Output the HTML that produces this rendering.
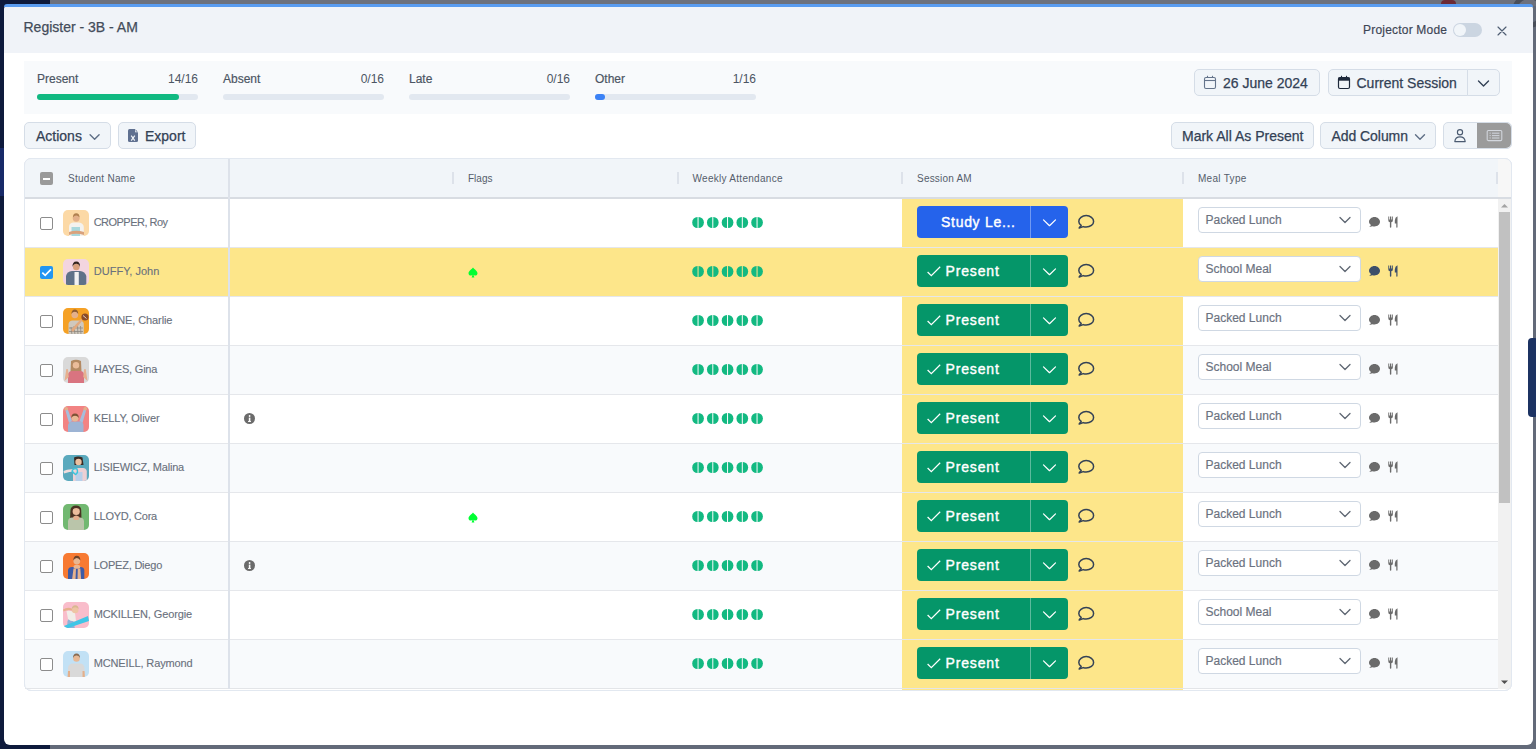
<!DOCTYPE html>
<html><head><meta charset="utf-8"><title>Register</title>
<style>
html,body{margin:0;padding:0;}
body{width:1536px;height:749px;overflow:hidden;position:relative;font-family:"Liberation Sans", sans-serif;}
.b{position:absolute;}
.t{position:absolute;white-space:nowrap;line-height:1;font-family:"Liberation Sans", sans-serif;}
</style></head><body>
<div class="b" style="left:0px;top:0px;width:1536px;height:749px;background:#636a79"></div>
<div class="b" style="left:0px;top:0px;width:1536px;height:6px;background:#6d717d"></div>
<div class="b" style="left:0px;top:0px;width:50px;height:749px;background:#0e1a3c"></div>
<div class="b" style="left:0px;top:148px;width:50px;height:48px;background:#182a68"></div>
<div class="b" style="left:1441px;top:0px;width:15px;height:4px;background:#6b2a36;border-radius:7px 7px 0 0"></div>
<div class="b" style="left:1512px;top:-6px;width:34px;height:34px;border:5px solid #4a4f5a;border-radius:50%;box-sizing:border-box"></div>
<div class="b" style="left:4px;top:4px;width:1529px;height:741px;background:#ffffff;border-radius:6px;overflow:hidden"></div>
<div class="b" style="left:4px;top:4px;width:1529px;height:49px;background:#f0f3f8;border-radius:6px 6px 0 0"></div>
<div class="b" style="left:4px;top:4px;width:1529px;height:3px;background:#5a9cf0;border-radius:6px 6px 0 0"></div>
<div class="t" style="left:23.5px;top:20.15px;font-size:14px;color:#434c5a;font-weight:400;-webkit-text-stroke:0.25px #434c5a;">Register - 3B - AM</div>
<div class="t" style="left:1363px;top:23.84px;font-size:12px;color:#3d4655;font-weight:400;letter-spacing:0.202px;-webkit-text-stroke:0.18px #3d4655;">Projector Mode</div>
<div class="b" style="left:1453px;top:23px;width:29px;height:14px;background:#cbd5e1;border-radius:7px"></div>
<div class="b" style="left:1454px;top:24px;width:12px;height:12px;background:#f1f5f9;border-radius:50%"></div>
<svg class="b" style="left:1496.5px;top:25.5px" width="10" height="10" viewBox="0 0 10 10"><path d="M1 1L9 9M9 1L1 9" stroke="#4f5d72" stroke-width="1.15" stroke-linecap="round"/></svg>
<div class="b" style="left:24px;top:61px;width:1488px;height:53px;background:#f8fafc"></div>
<div class="t" style="left:37px;top:72.84px;font-size:12px;color:#4b5563;font-weight:400;-webkit-text-stroke:0.18px #4b5563;">Present</div>
<div class="t" style="left:37px;top:72.84px;width:161px;text-align:right;font-size:12px;color:#4b5563">14/16</div>
<div class="b" style="left:37px;top:94px;width:161px;height:6px;background:#e2e8f0;border-radius:3px"></div>
<div class="b" style="left:37px;top:94px;width:142px;height:6px;background:#10b981;border-radius:3px"></div>
<div class="t" style="left:223px;top:72.84px;font-size:12px;color:#4b5563;font-weight:400;-webkit-text-stroke:0.18px #4b5563;">Absent</div>
<div class="t" style="left:223px;top:72.84px;width:161px;text-align:right;font-size:12px;color:#4b5563">0/16</div>
<div class="b" style="left:223px;top:94px;width:161px;height:6px;background:#e2e8f0;border-radius:3px"></div>
<div class="t" style="left:409px;top:72.84px;font-size:12px;color:#4b5563;font-weight:400;-webkit-text-stroke:0.18px #4b5563;">Late</div>
<div class="t" style="left:409px;top:72.84px;width:161px;text-align:right;font-size:12px;color:#4b5563">0/16</div>
<div class="b" style="left:409px;top:94px;width:161px;height:6px;background:#e2e8f0;border-radius:3px"></div>
<div class="t" style="left:595px;top:72.84px;font-size:12px;color:#4b5563;font-weight:400;-webkit-text-stroke:0.18px #4b5563;">Other</div>
<div class="t" style="left:595px;top:72.84px;width:161px;text-align:right;font-size:12px;color:#4b5563">1/16</div>
<div class="b" style="left:595px;top:94px;width:161px;height:6px;background:#e2e8f0;border-radius:3px"></div>
<div class="b" style="left:595px;top:94px;width:10px;height:6px;background:#3b82f6;border-radius:3px"></div>
<div class="b" style="left:1194px;top:69px;width:124px;height:25px;background:#f1f5f9;border:1px solid #d5dde7;border-radius:5px;"></div>
<svg class="b" style="left:1203px;top:75px" width="14" height="15" viewBox="0 0 14 15"><rect x="1.5" y="2.5" width="11" height="11" rx="1.5" fill="none" stroke="#64748b" stroke-width="1.1"/><line x1="1.5" y1="5.5" x2="12.5" y2="5.5" stroke="#64748b" stroke-width="1.1"/><line x1="4.5" y1="0.8" x2="4.5" y2="3" stroke="#64748b" stroke-width="1.1"/><line x1="9.5" y1="0.8" x2="9.5" y2="3" stroke="#64748b" stroke-width="1.1"/></svg>
<div class="t" style="left:1223px;top:75.75px;font-size:14px;color:#334155;font-weight:400;-webkit-text-stroke:0.25px #334155;">26 June 2024</div>
<div class="b" style="left:1328px;top:69px;width:138px;height:25px;background:#f1f5f9;border:1px solid #d5dde7;border-radius:5px;border-radius:5px 0 0 5px"></div>
<div class="b" style="left:1467px;top:69px;width:31px;height:25px;background:#f1f5f9;border:1px solid #d5dde7;border-radius:5px;border-radius:0 5px 5px 0"></div>
<svg class="b" style="left:1337px;top:75px" width="14" height="15" viewBox="0 0 14 15"><rect x="1.5" y="2.5" width="11" height="11" rx="1.5" fill="none" stroke="#1e293b" stroke-width="1.2"/><rect x="1.5" y="2.5" width="11" height="3.2" fill="#1e293b"/><line x1="4.5" y1="0.8" x2="4.5" y2="3" stroke="#1e293b" stroke-width="1.1"/><line x1="9.5" y1="0.8" x2="9.5" y2="3" stroke="#1e293b" stroke-width="1.1"/></svg>
<div class="t" style="left:1356.5px;top:75.75px;font-size:14px;color:#334155;font-weight:400;-webkit-text-stroke:0.25px #334155;">Current Session</div>
<svg class="b" style="left:0;top:0" width="1536" height="749"><polyline points="1478.5,81.0 1483.5,86.0 1488.5,81.0" fill="none" stroke="#334155" stroke-width="1.4" stroke-linecap="round" stroke-linejoin="round"/></svg>
<div class="b" style="left:24px;top:122px;width:85px;height:25px;background:#f1f5f9;border:1px solid #d5dde7;border-radius:5px;"></div>
<div class="t" style="left:36px;top:128.95px;font-size:14px;color:#334155;font-weight:400;-webkit-text-stroke:0.25px #334155;">Actions</div>
<svg class="b" style="left:0;top:0" width="1536" height="749"><polyline points="90.1,134.75 94.6,139.25 99.1,134.75" fill="none" stroke="#5f6f86" stroke-width="1.4" stroke-linecap="round" stroke-linejoin="round"/></svg>
<div class="b" style="left:118px;top:122px;width:76px;height:25px;background:#f1f5f9;border:1px solid #d5dde7;border-radius:5px;"></div>
<svg class="b" style="left:127px;top:128px" width="12" height="15" viewBox="0 0 12 15"><path d="M2.5 1H7.8L11 4.2V12.5Q11 14 9.5 14H2.5Q1 14 1 12.5V2.5Q1 1 2.5 1Z" fill="#5f7090"/><path d="M8 1V4.2H11Z" fill="#f1f5f9"/><path d="M8.6 1.6L10.4 3.6H8.6Z" fill="#5f7090"/><path d="M4.2 7.6L7.8 12.6M7.8 7.6L4.2 12.6" stroke="#f1f5f9" stroke-width="1.15"/></svg>
<div class="t" style="left:145px;top:128.95px;font-size:14px;color:#334155;font-weight:400;-webkit-text-stroke:0.25px #334155;">Export</div>
<div class="b" style="left:1171px;top:122px;width:141px;height:25px;background:#f1f5f9;border:1px solid #d5dde7;border-radius:5px;"></div>
<div class="t" style="left:1182px;top:128.95px;font-size:14px;color:#334155;font-weight:400;-webkit-text-stroke:0.25px #334155;">Mark All As Present</div>
<div class="b" style="left:1320px;top:122px;width:114px;height:25px;background:#f1f5f9;border:1px solid #d5dde7;border-radius:5px;"></div>
<div class="t" style="left:1331.5px;top:128.95px;font-size:14px;color:#334155;font-weight:400;letter-spacing:-0.061px;-webkit-text-stroke:0.25px #334155;">Add Column</div>
<svg class="b" style="left:0;top:0" width="1536" height="749"><polyline points="1415.5,134.75 1420,139.25 1424.5,134.75" fill="none" stroke="#5f6f86" stroke-width="1.4" stroke-linecap="round" stroke-linejoin="round"/></svg>
<div class="b" style="left:1443px;top:122px;width:67px;height:25px;background:#f1f5f9;border:1px solid #d5dde7;border-radius:5px"></div>
<div class="b" style="left:1477px;top:123px;width:34px;height:25px;background:#9b9b9b;border-radius:0 5px 5px 0"></div>
<svg class="b" style="left:1453px;top:128px" width="14" height="15" viewBox="0 0 14 15"><circle cx="7" cy="4.2" r="2.6" fill="none" stroke="#4a5a70" stroke-width="1.15"/><path d="M1.8 13.6Q2.3 8.9 7 8.9Q11.7 8.9 12.2 13.6Z" fill="none" stroke="#4a5a70" stroke-width="1.15" stroke-linejoin="round"/></svg>
<svg class="b" style="left:1486px;top:129px" width="17" height="13" viewBox="0 0 17 13"><rect x="1.2" y="1.4" width="14.6" height="10.2" rx="1.2" fill="none" stroke="#d3d7de" stroke-width="1.05"/><rect x="3.6" y="3.6" width="1.1" height="1.1" fill="#cdd1d8"/><rect x="3.6" y="6" width="1.1" height="1.1" fill="#cdd1d8"/><rect x="3.6" y="8.4" width="1.1" height="1.1" fill="#cdd1d8"/><line x1="6" y1="4.2" x2="13.4" y2="4.2" stroke="#cdd1d8" stroke-width="1.1"/><line x1="6" y1="6.6" x2="13.4" y2="6.6" stroke="#cdd1d8" stroke-width="1.1"/><line x1="6" y1="9" x2="13.4" y2="9" stroke="#cdd1d8" stroke-width="1.1"/></svg>
<div class="b" style="left:24px;top:158px;width:1488px;height:533px;background:#ffffff;border:1px solid #e2e8f0;border-radius:7px;box-sizing:border-box;overflow:hidden"></div>
<div class="b" style="left:25px;top:159px;width:1473px;height:38px;background:#f1f5f9;border-radius:6px 0 0 0"></div>
<div class="b" style="left:1498px;top:159px;width:13px;height:38px;background:#f7f7f7;border-radius:0 6px 0 0"></div>
<div class="b" style="left:40px;top:172px;width:13px;height:13px;background:#9a9a9a;border-radius:2px"></div>
<div class="b" style="left:43px;top:178px;width:7px;height:1.6px;background:#ffffff"></div>
<div class="t" style="left:68px;top:173.53px;font-size:10px;color:#555d6b;font-weight:400;letter-spacing:0.278px;">Student Name</div>
<div class="b" style="left:452px;top:172px;width:2px;height:12px;background:#dde2ea"></div>
<div class="b" style="left:677px;top:172px;width:2px;height:12px;background:#dde2ea"></div>
<div class="b" style="left:901px;top:172px;width:2px;height:12px;background:#dde2ea"></div>
<div class="b" style="left:1182px;top:172px;width:2px;height:12px;background:#dde2ea"></div>
<div class="b" style="left:1496px;top:172px;width:2px;height:12px;background:#dde2ea"></div>
<div class="t" style="left:468px;top:173.53px;font-size:10px;color:#555d6b;font-weight:400;">Flags</div>
<div class="t" style="left:692.5px;top:173.53px;font-size:10px;color:#555d6b;font-weight:400;letter-spacing:0.285px;">Weekly Attendance</div>
<div class="t" style="left:917px;top:173.53px;font-size:10px;color:#555d6b;font-weight:400;letter-spacing:0.210px;">Session AM</div>
<div class="t" style="left:1198px;top:173.53px;font-size:10px;color:#555d6b;font-weight:400;letter-spacing:0.293px;">Meal Type</div>
<div class="b" style="left:25px;top:198px;width:1473px;height:49px;background:#ffffff"></div>
<div class="b" style="left:902px;top:198px;width:281px;height:49px;background:#fde68a"></div>
<div class="b" style="left:40px;top:217px;width:13px;height:13px;background:#fff;border:1.8px solid #8c8c8c;border-radius:2px;box-sizing:border-box"></div>
<svg class="b" style="left:63px;top:210px" width="26" height="26" viewBox="0 0 26 26"><defs><clipPath id="ac0"><rect width="26" height="26" rx="5"/></clipPath></defs><g clip-path="url(#ac0)"><rect width="26" height="26" fill="#fcd9a6"/><path d="M6 27V17Q6 13 10 12.5H16Q20.5 13 20.8 17V27Z" fill="#f4f2ee"/><path d="M8.5 27V17H17V27Z" fill="#a9d8dc"/><path d="M6 22Q13 19.5 21 22V25Q13 22.5 6 25Z" fill="#d9a27c"/><circle cx="13.2" cy="8.3" r="3.4" fill="#e3b08a"/><path d="M9.8 7.5Q10 3.2 13.2 3.2Q16.5 3.2 16.6 7.5Q15 5.4 13.2 5.4Q11.4 5.4 9.8 7.5Z" fill="#b0804f"/></g></svg>
<div class="t" style="left:93.7px;top:217.39px;font-size:11px;color:#6a717d;font-weight:400;letter-spacing:-0.525px;-webkit-text-stroke:0.12px #6a717d;">CROPPER, Roy</div>
<svg class="b" style="left:692px;top:217px" width="72" height="11" viewBox="0 0 72 11"><rect x="0.20" y="0" width="11.7" height="11" rx="5.3" ry="5.5" fill="#12b981"/><rect x="5.55" y="0" width="1" height="11" fill="#ffffff"/><rect x="14.95" y="0" width="11.7" height="11" rx="5.3" ry="5.5" fill="#12b981"/><rect x="20.30" y="0" width="1" height="11" fill="#ffffff"/><rect x="29.70" y="0" width="11.7" height="11" rx="5.3" ry="5.5" fill="#12b981"/><rect x="35.05" y="0" width="1" height="11" fill="#ffffff"/><rect x="44.45" y="0" width="11.7" height="11" rx="5.3" ry="5.5" fill="#12b981"/><rect x="49.80" y="0" width="1" height="11" fill="#ffffff"/><rect x="59.20" y="0" width="11.7" height="11" rx="5.3" ry="5.5" fill="#12b981"/><rect x="64.55" y="0" width="1" height="11" fill="#ffffff"/></svg>
<div class="b" style="left:917px;top:206px;width:151px;height:32px;background:#2563eb;border-radius:4px"></div>
<div class="b" style="left:1029.5px;top:206px;width:1px;height:32px;background:rgba(255,255,255,0.35)"></div>
<div class="t" style="left:941px;top:214.85px;font-size:14px;color:#ffffff;font-weight:400;letter-spacing:0.706px;-webkit-text-stroke:0.25px #ffffff;-webkit-text-stroke:0.4px #fff;">Study Le...</div>
<svg class="b" style="left:0;top:0" width="1536" height="749"><polyline points="1043.5,219.9 1049.5,225.70000000000002 1055.5,219.9" fill="none" stroke="#ffffff" stroke-width="1.25" stroke-linecap="round" stroke-linejoin="round"/></svg>
<svg class="b" style="left:1077px;top:214px" width="19" height="15" viewBox="0 0 19 15"><path d="M4.2 11.3C2.6 10.3 1.8 8.9 1.8 7.4C1.8 4.2 5.1 1.6 9.2 1.6C13.3 1.6 16.6 4.2 16.6 7.4C16.6 10.6 13.3 13.1 9.2 13.1C8.1 13.1 7.1 12.9 6.2 12.6L2.2 14Z" fill="none" stroke="#344256" stroke-width="1.5" stroke-linejoin="round"/></svg>
<div class="b" style="left:1198px;top:207px;width:163px;height:26px;background:#fff;border:1px solid #cfd8e3;border-radius:4px;box-sizing:border-box"></div>
<div class="t" style="left:1205.5px;top:214.04px;font-size:12px;color:#6b7280;font-weight:400;-webkit-text-stroke:0.18px #6b7280;">Packed Lunch</div>
<svg class="b" style="left:0;top:0" width="1536" height="749"><polyline points="1340.0,217.5 1345,222.5 1350.0,217.5" fill="none" stroke="#5f6773" stroke-width="1.3" stroke-linecap="round" stroke-linejoin="round"/></svg>
<svg class="b" style="left:1368px;top:216px" width="13" height="11" viewBox="0 0 13 11"><path d="M3 9C1.7 8.2 1 7.1 1 5.8C1 3.2 3.5 1 6.5 1C9.5 1 12 3.2 12 5.8C12 8.4 9.5 10.5 6.5 10.5C5.8 10.5 5.1 10.4 4.5 10.2L1.2 10.9C2 10.5 2.6 9.8 3 9Z" fill="#6b6b6b"/></svg>
<svg class="b" style="left:1387px;top:216px" width="12" height="12" viewBox="0 0 12 12"><path d="M1.3 0.5V4.2Q1.3 6 2.9 6.2V11Q2.9 11.7 3.6 11.7Q4.3 11.7 4.3 11V6.2Q5.9 6 5.9 4.2V0.5H5.1V3.6H4.3V0.5H2.9V3.6H2.1V0.5Z" fill="#6b6b6b"/><path d="M10.5 0.3Q8 1.2 7.8 4.5V7.5H9.3V11Q9.3 11.7 9.9 11.7Q10.5 11.7 10.5 11Z" fill="#6b6b6b"/></svg>
<div class="b" style="left:25px;top:247px;width:1473px;height:49px;background:#fde68a"></div>
<div class="b" style="left:902px;top:247px;width:281px;height:49px;background:#fde68a"></div>
<div class="b" style="left:25px;top:247px;width:1473px;height:1px;background:#e5e7eb"></div>
<div class="b" style="left:40px;top:266px;width:13px;height:13px;background:#2196f3;border-radius:2px"></div>
<svg class="b" style="left:40px;top:266px" width="13" height="13" viewBox="0 0 13 13"><path d="M2.3 6.6L5.2 9.4L11 3.4" fill="none" stroke="#fff" stroke-width="1.7"/></svg>
<svg class="b" style="left:63px;top:259px" width="26" height="26" viewBox="0 0 26 26"><defs><clipPath id="ac1"><rect width="26" height="26" rx="5"/></clipPath></defs><g clip-path="url(#ac1)"><rect width="26" height="26" fill="#f3d5e0"/><path d="M3 27V17Q4 12.5 9 12H17Q22 12.5 23.3 17V27Z" fill="#5f7188"/><path d="M11.5 27V13H15.8V27Z" fill="#f2f2f2"/><circle cx="13.3" cy="8" r="3.3" fill="#d8a07c"/><path d="M9.5 8Q9.3 2.5 13.3 2.5Q17.3 2.5 17 8Q16 4.8 13.3 4.8Q10.5 4.8 9.5 8Z" fill="#33241c"/></g></svg>
<div class="t" style="left:93.7px;top:266.39px;font-size:11px;color:#6a717d;font-weight:400;letter-spacing:0.048px;-webkit-text-stroke:0.12px #6a717d;">DUFFY, John</div>
<svg class="b" style="left:468px;top:267px" width="10" height="11" viewBox="0 0 10 11"><path d="M5 0.5C3.5 2.5 0.5 4 0.5 6.3C0.5 7.8 1.6 8.6 2.7 8.6C3.6 8.6 4.3 8.1 4.6 7.5L3.6 10.4H6.4L5.4 7.5C5.7 8.1 6.4 8.6 7.3 8.6C8.4 8.6 9.5 7.8 9.5 6.3C9.5 4 6.5 2.5 5 0.5Z" fill="#00ff33"/></svg>
<svg class="b" style="left:692px;top:266px" width="72" height="11" viewBox="0 0 72 11"><rect x="0.20" y="0" width="11.7" height="11" rx="5.3" ry="5.5" fill="#12b981"/><rect x="5.55" y="0" width="1" height="11" fill="#fde68a"/><rect x="14.95" y="0" width="11.7" height="11" rx="5.3" ry="5.5" fill="#12b981"/><rect x="20.30" y="0" width="1" height="11" fill="#fde68a"/><rect x="29.70" y="0" width="11.7" height="11" rx="5.3" ry="5.5" fill="#12b981"/><rect x="35.05" y="0" width="1" height="11" fill="#fde68a"/><rect x="44.45" y="0" width="11.7" height="11" rx="5.3" ry="5.5" fill="#12b981"/><rect x="49.80" y="0" width="1" height="11" fill="#fde68a"/><rect x="59.20" y="0" width="11.7" height="11" rx="5.3" ry="5.5" fill="#12b981"/><rect x="64.55" y="0" width="1" height="11" fill="#fde68a"/></svg>
<div class="b" style="left:917px;top:255px;width:151px;height:32px;background:#059669;border-radius:4px"></div>
<div class="b" style="left:1029.5px;top:255px;width:1px;height:32px;background:rgba(255,255,255,0.35)"></div>
<svg class="b" style="left:926px;top:265px" width="16" height="12" viewBox="0 0 16 12"><path d="M1.6 7L5.3 10.6L14.2 1.8" fill="none" stroke="#fff" stroke-width="1.25"/></svg>
<div class="t" style="left:945.5px;top:263.85px;font-size:14px;color:#ffffff;font-weight:400;letter-spacing:0.858px;-webkit-text-stroke:0.25px #ffffff;-webkit-text-stroke:0.4px #fff;">Present</div>
<svg class="b" style="left:0;top:0" width="1536" height="749"><polyline points="1043.5,268.90000000000003 1049.5,274.7 1055.5,268.90000000000003" fill="none" stroke="#ffffff" stroke-width="1.25" stroke-linecap="round" stroke-linejoin="round"/></svg>
<svg class="b" style="left:1077px;top:263px" width="19" height="15" viewBox="0 0 19 15"><path d="M4.2 11.3C2.6 10.3 1.8 8.9 1.8 7.4C1.8 4.2 5.1 1.6 9.2 1.6C13.3 1.6 16.6 4.2 16.6 7.4C16.6 10.6 13.3 13.1 9.2 13.1C8.1 13.1 7.1 12.9 6.2 12.6L2.2 14Z" fill="none" stroke="#344256" stroke-width="1.5" stroke-linejoin="round"/></svg>
<div class="b" style="left:1198px;top:256px;width:163px;height:26px;background:#fff;border:1px solid #cfd8e3;border-radius:4px;box-sizing:border-box"></div>
<div class="t" style="left:1205.5px;top:263.04px;font-size:12px;color:#6b7280;font-weight:400;-webkit-text-stroke:0.18px #6b7280;">School Meal</div>
<svg class="b" style="left:0;top:0" width="1536" height="749"><polyline points="1340.0,266.5 1345,271.5 1350.0,266.5" fill="none" stroke="#5f6773" stroke-width="1.3" stroke-linecap="round" stroke-linejoin="round"/></svg>
<svg class="b" style="left:1368px;top:265px" width="13" height="11" viewBox="0 0 13 11"><path d="M3 9C1.7 8.2 1 7.1 1 5.8C1 3.2 3.5 1 6.5 1C9.5 1 12 3.2 12 5.8C12 8.4 9.5 10.5 6.5 10.5C5.8 10.5 5.1 10.4 4.5 10.2L1.2 10.9C2 10.5 2.6 9.8 3 9Z" fill="#3d4f6a"/></svg>
<svg class="b" style="left:1387px;top:265px" width="12" height="12" viewBox="0 0 12 12"><path d="M1.3 0.5V4.2Q1.3 6 2.9 6.2V11Q2.9 11.7 3.6 11.7Q4.3 11.7 4.3 11V6.2Q5.9 6 5.9 4.2V0.5H5.1V3.6H4.3V0.5H2.9V3.6H2.1V0.5Z" fill="#3d4f6a"/><path d="M10.5 0.3Q8 1.2 7.8 4.5V7.5H9.3V11Q9.3 11.7 9.9 11.7Q10.5 11.7 10.5 11Z" fill="#3d4f6a"/></svg>
<div class="b" style="left:25px;top:296px;width:1473px;height:49px;background:#ffffff"></div>
<div class="b" style="left:902px;top:296px;width:281px;height:49px;background:#fde68a"></div>
<div class="b" style="left:25px;top:296px;width:1473px;height:1px;background:#e5e7eb"></div>
<div class="b" style="left:40px;top:315px;width:13px;height:13px;background:#fff;border:1.8px solid #8c8c8c;border-radius:2px;box-sizing:border-box"></div>
<svg class="b" style="left:63px;top:308px" width="26" height="26" viewBox="0 0 26 26"><defs><clipPath id="ac2"><rect width="26" height="26" rx="5"/></clipPath></defs><g clip-path="url(#ac2)"><rect width="26" height="26" fill="#f5a125"/><path d="M5.5 27V16Q6 12.5 9.5 12.5H16.5Q20.5 12.5 20.8 16V27Z" fill="#cfc8bd"/><path d="M8 19L9 27M11 18L12 27M14.5 18L15 27M17.5 18L18 27M6 20H20M6 23.5H20" stroke="#8d8880" stroke-width="0.8"/><path d="M8 22Q12 17 18 11L19.5 12.5Q14 19 10 24Z" fill="#e2a97e"/><circle cx="11.8" cy="6.8" r="3.4" fill="#e5b08a"/><path d="M8.4 6Q8.6 1.5 11.8 1.5Q15.2 1.5 15.2 6Q14 3.8 11.8 3.8Q9.6 3.8 8.4 6Z" fill="#8e5c34"/><circle cx="22" cy="9" r="3.6" fill="#8a4a27"/><path d="M20 7.5L23.5 10.5" stroke="#e8e0d8" stroke-width="0.9"/></g></svg>
<div class="t" style="left:93.7px;top:315.39px;font-size:11px;color:#6a717d;font-weight:400;letter-spacing:-0.098px;-webkit-text-stroke:0.12px #6a717d;">DUNNE, Charlie</div>
<svg class="b" style="left:692px;top:315px" width="72" height="11" viewBox="0 0 72 11"><rect x="0.20" y="0" width="11.7" height="11" rx="5.3" ry="5.5" fill="#12b981"/><rect x="5.55" y="0" width="1" height="11" fill="#ffffff"/><rect x="14.95" y="0" width="11.7" height="11" rx="5.3" ry="5.5" fill="#12b981"/><rect x="20.30" y="0" width="1" height="11" fill="#ffffff"/><rect x="29.70" y="0" width="11.7" height="11" rx="5.3" ry="5.5" fill="#12b981"/><rect x="35.05" y="0" width="1" height="11" fill="#ffffff"/><rect x="44.45" y="0" width="11.7" height="11" rx="5.3" ry="5.5" fill="#12b981"/><rect x="49.80" y="0" width="1" height="11" fill="#ffffff"/><rect x="59.20" y="0" width="11.7" height="11" rx="5.3" ry="5.5" fill="#12b981"/><rect x="64.55" y="0" width="1" height="11" fill="#ffffff"/></svg>
<div class="b" style="left:917px;top:304px;width:151px;height:32px;background:#059669;border-radius:4px"></div>
<div class="b" style="left:1029.5px;top:304px;width:1px;height:32px;background:rgba(255,255,255,0.35)"></div>
<svg class="b" style="left:926px;top:314px" width="16" height="12" viewBox="0 0 16 12"><path d="M1.6 7L5.3 10.6L14.2 1.8" fill="none" stroke="#fff" stroke-width="1.25"/></svg>
<div class="t" style="left:945.5px;top:312.85px;font-size:14px;color:#ffffff;font-weight:400;letter-spacing:0.858px;-webkit-text-stroke:0.25px #ffffff;-webkit-text-stroke:0.4px #fff;">Present</div>
<svg class="b" style="left:0;top:0" width="1536" height="749"><polyline points="1043.5,317.90000000000003 1049.5,323.7 1055.5,317.90000000000003" fill="none" stroke="#ffffff" stroke-width="1.25" stroke-linecap="round" stroke-linejoin="round"/></svg>
<svg class="b" style="left:1077px;top:312px" width="19" height="15" viewBox="0 0 19 15"><path d="M4.2 11.3C2.6 10.3 1.8 8.9 1.8 7.4C1.8 4.2 5.1 1.6 9.2 1.6C13.3 1.6 16.6 4.2 16.6 7.4C16.6 10.6 13.3 13.1 9.2 13.1C8.1 13.1 7.1 12.9 6.2 12.6L2.2 14Z" fill="none" stroke="#344256" stroke-width="1.5" stroke-linejoin="round"/></svg>
<div class="b" style="left:1198px;top:305px;width:163px;height:26px;background:#fff;border:1px solid #cfd8e3;border-radius:4px;box-sizing:border-box"></div>
<div class="t" style="left:1205.5px;top:312.04px;font-size:12px;color:#6b7280;font-weight:400;-webkit-text-stroke:0.18px #6b7280;">Packed Lunch</div>
<svg class="b" style="left:0;top:0" width="1536" height="749"><polyline points="1340.0,315.5 1345,320.5 1350.0,315.5" fill="none" stroke="#5f6773" stroke-width="1.3" stroke-linecap="round" stroke-linejoin="round"/></svg>
<svg class="b" style="left:1368px;top:314px" width="13" height="11" viewBox="0 0 13 11"><path d="M3 9C1.7 8.2 1 7.1 1 5.8C1 3.2 3.5 1 6.5 1C9.5 1 12 3.2 12 5.8C12 8.4 9.5 10.5 6.5 10.5C5.8 10.5 5.1 10.4 4.5 10.2L1.2 10.9C2 10.5 2.6 9.8 3 9Z" fill="#6b6b6b"/></svg>
<svg class="b" style="left:1387px;top:314px" width="12" height="12" viewBox="0 0 12 12"><path d="M1.3 0.5V4.2Q1.3 6 2.9 6.2V11Q2.9 11.7 3.6 11.7Q4.3 11.7 4.3 11V6.2Q5.9 6 5.9 4.2V0.5H5.1V3.6H4.3V0.5H2.9V3.6H2.1V0.5Z" fill="#6b6b6b"/><path d="M10.5 0.3Q8 1.2 7.8 4.5V7.5H9.3V11Q9.3 11.7 9.9 11.7Q10.5 11.7 10.5 11Z" fill="#6b6b6b"/></svg>
<div class="b" style="left:25px;top:345px;width:1473px;height:49px;background:#f8fafc"></div>
<div class="b" style="left:902px;top:345px;width:281px;height:49px;background:#fde68a"></div>
<div class="b" style="left:25px;top:345px;width:1473px;height:1px;background:#e5e7eb"></div>
<div class="b" style="left:40px;top:364px;width:13px;height:13px;background:#fff;border:1.8px solid #8c8c8c;border-radius:2px;box-sizing:border-box"></div>
<svg class="b" style="left:63px;top:357px" width="26" height="26" viewBox="0 0 26 26"><defs><clipPath id="ac3"><rect width="26" height="26" rx="5"/></clipPath></defs><g clip-path="url(#ac3)"><rect width="26" height="26" fill="#d9d9d9"/><path d="M8 4Q13 1.5 18 4L18.5 15H7.5Z" fill="#b48a63"/><path d="M5 27V17Q6 14 9 14H17Q20.5 14 21 17V27Z" fill="#d97480"/><path d="M1.5 24L3.3 12L5 12.3L5.8 20Z M24.5 24L22.7 12L21 12.3L20.2 20Z" fill="#e6b190"/><circle cx="13" cy="8.3" r="3.2" fill="#ebbc9a"/></g></svg>
<div class="t" style="left:93.7px;top:364.39px;font-size:11px;color:#6a717d;font-weight:400;letter-spacing:-0.213px;-webkit-text-stroke:0.12px #6a717d;">HAYES, Gina</div>
<svg class="b" style="left:692px;top:364px" width="72" height="11" viewBox="0 0 72 11"><rect x="0.20" y="0" width="11.7" height="11" rx="5.3" ry="5.5" fill="#12b981"/><rect x="5.55" y="0" width="1" height="11" fill="#f8fafc"/><rect x="14.95" y="0" width="11.7" height="11" rx="5.3" ry="5.5" fill="#12b981"/><rect x="20.30" y="0" width="1" height="11" fill="#f8fafc"/><rect x="29.70" y="0" width="11.7" height="11" rx="5.3" ry="5.5" fill="#12b981"/><rect x="35.05" y="0" width="1" height="11" fill="#f8fafc"/><rect x="44.45" y="0" width="11.7" height="11" rx="5.3" ry="5.5" fill="#12b981"/><rect x="49.80" y="0" width="1" height="11" fill="#f8fafc"/><rect x="59.20" y="0" width="11.7" height="11" rx="5.3" ry="5.5" fill="#12b981"/><rect x="64.55" y="0" width="1" height="11" fill="#f8fafc"/></svg>
<div class="b" style="left:917px;top:353px;width:151px;height:32px;background:#059669;border-radius:4px"></div>
<div class="b" style="left:1029.5px;top:353px;width:1px;height:32px;background:rgba(255,255,255,0.35)"></div>
<svg class="b" style="left:926px;top:363px" width="16" height="12" viewBox="0 0 16 12"><path d="M1.6 7L5.3 10.6L14.2 1.8" fill="none" stroke="#fff" stroke-width="1.25"/></svg>
<div class="t" style="left:945.5px;top:361.85px;font-size:14px;color:#ffffff;font-weight:400;letter-spacing:0.858px;-webkit-text-stroke:0.25px #ffffff;-webkit-text-stroke:0.4px #fff;">Present</div>
<svg class="b" style="left:0;top:0" width="1536" height="749"><polyline points="1043.5,366.90000000000003 1049.5,372.7 1055.5,366.90000000000003" fill="none" stroke="#ffffff" stroke-width="1.25" stroke-linecap="round" stroke-linejoin="round"/></svg>
<svg class="b" style="left:1077px;top:361px" width="19" height="15" viewBox="0 0 19 15"><path d="M4.2 11.3C2.6 10.3 1.8 8.9 1.8 7.4C1.8 4.2 5.1 1.6 9.2 1.6C13.3 1.6 16.6 4.2 16.6 7.4C16.6 10.6 13.3 13.1 9.2 13.1C8.1 13.1 7.1 12.9 6.2 12.6L2.2 14Z" fill="none" stroke="#344256" stroke-width="1.5" stroke-linejoin="round"/></svg>
<div class="b" style="left:1198px;top:354px;width:163px;height:26px;background:#fff;border:1px solid #cfd8e3;border-radius:4px;box-sizing:border-box"></div>
<div class="t" style="left:1205.5px;top:361.04px;font-size:12px;color:#6b7280;font-weight:400;-webkit-text-stroke:0.18px #6b7280;">School Meal</div>
<svg class="b" style="left:0;top:0" width="1536" height="749"><polyline points="1340.0,364.5 1345,369.5 1350.0,364.5" fill="none" stroke="#5f6773" stroke-width="1.3" stroke-linecap="round" stroke-linejoin="round"/></svg>
<svg class="b" style="left:1368px;top:363px" width="13" height="11" viewBox="0 0 13 11"><path d="M3 9C1.7 8.2 1 7.1 1 5.8C1 3.2 3.5 1 6.5 1C9.5 1 12 3.2 12 5.8C12 8.4 9.5 10.5 6.5 10.5C5.8 10.5 5.1 10.4 4.5 10.2L1.2 10.9C2 10.5 2.6 9.8 3 9Z" fill="#6b6b6b"/></svg>
<svg class="b" style="left:1387px;top:363px" width="12" height="12" viewBox="0 0 12 12"><path d="M1.3 0.5V4.2Q1.3 6 2.9 6.2V11Q2.9 11.7 3.6 11.7Q4.3 11.7 4.3 11V6.2Q5.9 6 5.9 4.2V0.5H5.1V3.6H4.3V0.5H2.9V3.6H2.1V0.5Z" fill="#6b6b6b"/><path d="M10.5 0.3Q8 1.2 7.8 4.5V7.5H9.3V11Q9.3 11.7 9.9 11.7Q10.5 11.7 10.5 11Z" fill="#6b6b6b"/></svg>
<div class="b" style="left:25px;top:394px;width:1473px;height:49px;background:#ffffff"></div>
<div class="b" style="left:902px;top:394px;width:281px;height:49px;background:#fde68a"></div>
<div class="b" style="left:25px;top:394px;width:1473px;height:1px;background:#e5e7eb"></div>
<div class="b" style="left:40px;top:413px;width:13px;height:13px;background:#fff;border:1.8px solid #8c8c8c;border-radius:2px;box-sizing:border-box"></div>
<svg class="b" style="left:63px;top:406px" width="26" height="26" viewBox="0 0 26 26"><defs><clipPath id="ac4"><rect width="26" height="26" rx="5"/></clipPath></defs><g clip-path="url(#ac4)"><rect width="26" height="26" fill="#f28383"/><path d="M2 3L4.5 2.5L9 15L6 17Z M23.5 3L21 2.5L16.5 15L19.5 17Z" fill="#a6bedc"/><circle cx="3.2" cy="2.8" r="1.8" fill="#e3b08a"/><circle cx="22.3" cy="2.8" r="1.8" fill="#e3b08a"/><path d="M5 27V19Q6 15.5 9.5 15.5H17Q20 15.5 20.5 19V27Z" fill="#9db4d4"/><circle cx="12" cy="12.3" r="3.3" fill="#e8b894"/><path d="M8.4 12Q8 7.5 12 7.5Q16 7.5 15.7 12Q14.5 9.8 12 9.8Q9.5 9.8 8.4 12Z" fill="#7d5234"/></g></svg>
<div class="t" style="left:93.7px;top:413.39px;font-size:11px;color:#6a717d;font-weight:400;letter-spacing:-0.072px;-webkit-text-stroke:0.12px #6a717d;">KELLY, Oliver</div>
<svg class="b" style="left:244px;top:413px" width="11" height="11" viewBox="0 0 11 11"><circle cx="5.5" cy="5.5" r="5.5" fill="#6b6b6b"/><rect x="4.8" y="4.6" width="1.6" height="4" fill="#fff"/><circle cx="5.6" cy="3" r="0.9" fill="#fff"/><rect x="4" y="8" width="3" height="0.9" fill="#fff"/></svg>
<svg class="b" style="left:692px;top:413px" width="72" height="11" viewBox="0 0 72 11"><rect x="0.20" y="0" width="11.7" height="11" rx="5.3" ry="5.5" fill="#12b981"/><rect x="5.55" y="0" width="1" height="11" fill="#ffffff"/><rect x="14.95" y="0" width="11.7" height="11" rx="5.3" ry="5.5" fill="#12b981"/><rect x="20.30" y="0" width="1" height="11" fill="#ffffff"/><rect x="29.70" y="0" width="11.7" height="11" rx="5.3" ry="5.5" fill="#12b981"/><rect x="35.05" y="0" width="1" height="11" fill="#ffffff"/><rect x="44.45" y="0" width="11.7" height="11" rx="5.3" ry="5.5" fill="#12b981"/><rect x="49.80" y="0" width="1" height="11" fill="#ffffff"/><rect x="59.20" y="0" width="11.7" height="11" rx="5.3" ry="5.5" fill="#12b981"/><rect x="64.55" y="0" width="1" height="11" fill="#ffffff"/></svg>
<div class="b" style="left:917px;top:402px;width:151px;height:32px;background:#059669;border-radius:4px"></div>
<div class="b" style="left:1029.5px;top:402px;width:1px;height:32px;background:rgba(255,255,255,0.35)"></div>
<svg class="b" style="left:926px;top:412px" width="16" height="12" viewBox="0 0 16 12"><path d="M1.6 7L5.3 10.6L14.2 1.8" fill="none" stroke="#fff" stroke-width="1.25"/></svg>
<div class="t" style="left:945.5px;top:410.85px;font-size:14px;color:#ffffff;font-weight:400;letter-spacing:0.858px;-webkit-text-stroke:0.25px #ffffff;-webkit-text-stroke:0.4px #fff;">Present</div>
<svg class="b" style="left:0;top:0" width="1536" height="749"><polyline points="1043.5,415.90000000000003 1049.5,421.7 1055.5,415.90000000000003" fill="none" stroke="#ffffff" stroke-width="1.25" stroke-linecap="round" stroke-linejoin="round"/></svg>
<svg class="b" style="left:1077px;top:410px" width="19" height="15" viewBox="0 0 19 15"><path d="M4.2 11.3C2.6 10.3 1.8 8.9 1.8 7.4C1.8 4.2 5.1 1.6 9.2 1.6C13.3 1.6 16.6 4.2 16.6 7.4C16.6 10.6 13.3 13.1 9.2 13.1C8.1 13.1 7.1 12.9 6.2 12.6L2.2 14Z" fill="none" stroke="#344256" stroke-width="1.5" stroke-linejoin="round"/></svg>
<div class="b" style="left:1198px;top:403px;width:163px;height:26px;background:#fff;border:1px solid #cfd8e3;border-radius:4px;box-sizing:border-box"></div>
<div class="t" style="left:1205.5px;top:410.04px;font-size:12px;color:#6b7280;font-weight:400;-webkit-text-stroke:0.18px #6b7280;">Packed Lunch</div>
<svg class="b" style="left:0;top:0" width="1536" height="749"><polyline points="1340.0,413.5 1345,418.5 1350.0,413.5" fill="none" stroke="#5f6773" stroke-width="1.3" stroke-linecap="round" stroke-linejoin="round"/></svg>
<svg class="b" style="left:1368px;top:412px" width="13" height="11" viewBox="0 0 13 11"><path d="M3 9C1.7 8.2 1 7.1 1 5.8C1 3.2 3.5 1 6.5 1C9.5 1 12 3.2 12 5.8C12 8.4 9.5 10.5 6.5 10.5C5.8 10.5 5.1 10.4 4.5 10.2L1.2 10.9C2 10.5 2.6 9.8 3 9Z" fill="#6b6b6b"/></svg>
<svg class="b" style="left:1387px;top:412px" width="12" height="12" viewBox="0 0 12 12"><path d="M1.3 0.5V4.2Q1.3 6 2.9 6.2V11Q2.9 11.7 3.6 11.7Q4.3 11.7 4.3 11V6.2Q5.9 6 5.9 4.2V0.5H5.1V3.6H4.3V0.5H2.9V3.6H2.1V0.5Z" fill="#6b6b6b"/><path d="M10.5 0.3Q8 1.2 7.8 4.5V7.5H9.3V11Q9.3 11.7 9.9 11.7Q10.5 11.7 10.5 11Z" fill="#6b6b6b"/></svg>
<div class="b" style="left:25px;top:443px;width:1473px;height:49px;background:#f8fafc"></div>
<div class="b" style="left:902px;top:443px;width:281px;height:49px;background:#fde68a"></div>
<div class="b" style="left:25px;top:443px;width:1473px;height:1px;background:#e5e7eb"></div>
<div class="b" style="left:40px;top:462px;width:13px;height:13px;background:#fff;border:1.8px solid #8c8c8c;border-radius:2px;box-sizing:border-box"></div>
<svg class="b" style="left:63px;top:455px" width="26" height="26" viewBox="0 0 26 26"><defs><clipPath id="ac5"><rect width="26" height="26" rx="5"/></clipPath></defs><g clip-path="url(#ac5)"><rect width="26" height="26" fill="#5aa9bd"/><path d="M11 2.5Q15 0.5 19.5 2.5L20.5 10H11.5Z" fill="#3a2a24"/><path d="M10 27V16Q11 13 14 13H20Q23 13 23.8 16V27Z" fill="#ecd0d4"/><path d="M12.5 27V17H19.5V27Z" fill="#b7d0ea"/><path d="M0.5 16Q5 13.5 12 14.5L12.5 16.5Q6 16.5 1 18.5Z" fill="#f0dcdc"/><path d="M9 16Q11 12.5 14 14Q15.5 18 12.5 19.5Q10.5 18 9 16Z" fill="none" stroke="#3cc4dc" stroke-width="1.4"/><circle cx="15.5" cy="7" r="3.2" fill="#ecc0a0"/></g></svg>
<div class="t" style="left:93.7px;top:462.39px;font-size:11px;color:#6a717d;font-weight:400;letter-spacing:-0.189px;-webkit-text-stroke:0.12px #6a717d;">LISIEWICZ, Malina</div>
<svg class="b" style="left:692px;top:462px" width="72" height="11" viewBox="0 0 72 11"><rect x="0.20" y="0" width="11.7" height="11" rx="5.3" ry="5.5" fill="#12b981"/><rect x="5.55" y="0" width="1" height="11" fill="#f8fafc"/><rect x="14.95" y="0" width="11.7" height="11" rx="5.3" ry="5.5" fill="#12b981"/><rect x="20.30" y="0" width="1" height="11" fill="#f8fafc"/><rect x="29.70" y="0" width="11.7" height="11" rx="5.3" ry="5.5" fill="#12b981"/><rect x="35.05" y="0" width="1" height="11" fill="#f8fafc"/><rect x="44.45" y="0" width="11.7" height="11" rx="5.3" ry="5.5" fill="#12b981"/><rect x="49.80" y="0" width="1" height="11" fill="#f8fafc"/><rect x="59.20" y="0" width="11.7" height="11" rx="5.3" ry="5.5" fill="#12b981"/><rect x="64.55" y="0" width="1" height="11" fill="#f8fafc"/></svg>
<div class="b" style="left:917px;top:451px;width:151px;height:32px;background:#059669;border-radius:4px"></div>
<div class="b" style="left:1029.5px;top:451px;width:1px;height:32px;background:rgba(255,255,255,0.35)"></div>
<svg class="b" style="left:926px;top:461px" width="16" height="12" viewBox="0 0 16 12"><path d="M1.6 7L5.3 10.6L14.2 1.8" fill="none" stroke="#fff" stroke-width="1.25"/></svg>
<div class="t" style="left:945.5px;top:459.85px;font-size:14px;color:#ffffff;font-weight:400;letter-spacing:0.858px;-webkit-text-stroke:0.25px #ffffff;-webkit-text-stroke:0.4px #fff;">Present</div>
<svg class="b" style="left:0;top:0" width="1536" height="749"><polyline points="1043.5,464.90000000000003 1049.5,470.7 1055.5,464.90000000000003" fill="none" stroke="#ffffff" stroke-width="1.25" stroke-linecap="round" stroke-linejoin="round"/></svg>
<svg class="b" style="left:1077px;top:459px" width="19" height="15" viewBox="0 0 19 15"><path d="M4.2 11.3C2.6 10.3 1.8 8.9 1.8 7.4C1.8 4.2 5.1 1.6 9.2 1.6C13.3 1.6 16.6 4.2 16.6 7.4C16.6 10.6 13.3 13.1 9.2 13.1C8.1 13.1 7.1 12.9 6.2 12.6L2.2 14Z" fill="none" stroke="#344256" stroke-width="1.5" stroke-linejoin="round"/></svg>
<div class="b" style="left:1198px;top:452px;width:163px;height:26px;background:#fff;border:1px solid #cfd8e3;border-radius:4px;box-sizing:border-box"></div>
<div class="t" style="left:1205.5px;top:459.04px;font-size:12px;color:#6b7280;font-weight:400;-webkit-text-stroke:0.18px #6b7280;">Packed Lunch</div>
<svg class="b" style="left:0;top:0" width="1536" height="749"><polyline points="1340.0,462.5 1345,467.5 1350.0,462.5" fill="none" stroke="#5f6773" stroke-width="1.3" stroke-linecap="round" stroke-linejoin="round"/></svg>
<svg class="b" style="left:1368px;top:461px" width="13" height="11" viewBox="0 0 13 11"><path d="M3 9C1.7 8.2 1 7.1 1 5.8C1 3.2 3.5 1 6.5 1C9.5 1 12 3.2 12 5.8C12 8.4 9.5 10.5 6.5 10.5C5.8 10.5 5.1 10.4 4.5 10.2L1.2 10.9C2 10.5 2.6 9.8 3 9Z" fill="#6b6b6b"/></svg>
<svg class="b" style="left:1387px;top:461px" width="12" height="12" viewBox="0 0 12 12"><path d="M1.3 0.5V4.2Q1.3 6 2.9 6.2V11Q2.9 11.7 3.6 11.7Q4.3 11.7 4.3 11V6.2Q5.9 6 5.9 4.2V0.5H5.1V3.6H4.3V0.5H2.9V3.6H2.1V0.5Z" fill="#6b6b6b"/><path d="M10.5 0.3Q8 1.2 7.8 4.5V7.5H9.3V11Q9.3 11.7 9.9 11.7Q10.5 11.7 10.5 11Z" fill="#6b6b6b"/></svg>
<div class="b" style="left:25px;top:492px;width:1473px;height:49px;background:#ffffff"></div>
<div class="b" style="left:902px;top:492px;width:281px;height:49px;background:#fde68a"></div>
<div class="b" style="left:25px;top:492px;width:1473px;height:1px;background:#e5e7eb"></div>
<div class="b" style="left:40px;top:511px;width:13px;height:13px;background:#fff;border:1.8px solid #8c8c8c;border-radius:2px;box-sizing:border-box"></div>
<svg class="b" style="left:63px;top:504px" width="26" height="26" viewBox="0 0 26 26"><defs><clipPath id="ac6"><rect width="26" height="26" rx="5"/></clipPath></defs><g clip-path="url(#ac6)"><rect width="26" height="26" fill="#72b871"/><path d="M7.5 6Q8 1.5 13 1.5Q18 1.5 18.2 6L18.5 15L16 26H8L7 15Z" fill="#4a3222"/><path d="M5 27V17Q5.5 13.5 9 13.5H17Q20.5 13.5 21 17V27Z" fill="#bac5aa"/><circle cx="13.2" cy="7.5" r="3.6" fill="#ebbd9c"/><path d="M10 13Q13 10 16.5 13L15.5 16H11Z" fill="#e4ae8c"/></g></svg>
<div class="t" style="left:93.7px;top:511.39px;font-size:11px;color:#6a717d;font-weight:400;letter-spacing:-0.253px;-webkit-text-stroke:0.12px #6a717d;">LLOYD, Cora</div>
<svg class="b" style="left:468px;top:512px" width="10" height="11" viewBox="0 0 10 11"><path d="M5 0.5C3.5 2.5 0.5 4 0.5 6.3C0.5 7.8 1.6 8.6 2.7 8.6C3.6 8.6 4.3 8.1 4.6 7.5L3.6 10.4H6.4L5.4 7.5C5.7 8.1 6.4 8.6 7.3 8.6C8.4 8.6 9.5 7.8 9.5 6.3C9.5 4 6.5 2.5 5 0.5Z" fill="#00ff33"/></svg>
<svg class="b" style="left:692px;top:511px" width="72" height="11" viewBox="0 0 72 11"><rect x="0.20" y="0" width="11.7" height="11" rx="5.3" ry="5.5" fill="#12b981"/><rect x="5.55" y="0" width="1" height="11" fill="#ffffff"/><rect x="14.95" y="0" width="11.7" height="11" rx="5.3" ry="5.5" fill="#12b981"/><rect x="20.30" y="0" width="1" height="11" fill="#ffffff"/><rect x="29.70" y="0" width="11.7" height="11" rx="5.3" ry="5.5" fill="#12b981"/><rect x="35.05" y="0" width="1" height="11" fill="#ffffff"/><rect x="44.45" y="0" width="11.7" height="11" rx="5.3" ry="5.5" fill="#12b981"/><rect x="49.80" y="0" width="1" height="11" fill="#ffffff"/><rect x="59.20" y="0" width="11.7" height="11" rx="5.3" ry="5.5" fill="#12b981"/><rect x="64.55" y="0" width="1" height="11" fill="#ffffff"/></svg>
<div class="b" style="left:917px;top:500px;width:151px;height:32px;background:#059669;border-radius:4px"></div>
<div class="b" style="left:1029.5px;top:500px;width:1px;height:32px;background:rgba(255,255,255,0.35)"></div>
<svg class="b" style="left:926px;top:510px" width="16" height="12" viewBox="0 0 16 12"><path d="M1.6 7L5.3 10.6L14.2 1.8" fill="none" stroke="#fff" stroke-width="1.25"/></svg>
<div class="t" style="left:945.5px;top:508.85px;font-size:14px;color:#ffffff;font-weight:400;letter-spacing:0.858px;-webkit-text-stroke:0.25px #ffffff;-webkit-text-stroke:0.4px #fff;">Present</div>
<svg class="b" style="left:0;top:0" width="1536" height="749"><polyline points="1043.5,513.9 1049.5,519.6999999999999 1055.5,513.9" fill="none" stroke="#ffffff" stroke-width="1.25" stroke-linecap="round" stroke-linejoin="round"/></svg>
<svg class="b" style="left:1077px;top:508px" width="19" height="15" viewBox="0 0 19 15"><path d="M4.2 11.3C2.6 10.3 1.8 8.9 1.8 7.4C1.8 4.2 5.1 1.6 9.2 1.6C13.3 1.6 16.6 4.2 16.6 7.4C16.6 10.6 13.3 13.1 9.2 13.1C8.1 13.1 7.1 12.9 6.2 12.6L2.2 14Z" fill="none" stroke="#344256" stroke-width="1.5" stroke-linejoin="round"/></svg>
<div class="b" style="left:1198px;top:501px;width:163px;height:26px;background:#fff;border:1px solid #cfd8e3;border-radius:4px;box-sizing:border-box"></div>
<div class="t" style="left:1205.5px;top:508.04px;font-size:12px;color:#6b7280;font-weight:400;-webkit-text-stroke:0.18px #6b7280;">Packed Lunch</div>
<svg class="b" style="left:0;top:0" width="1536" height="749"><polyline points="1340.0,511.5 1345,516.5 1350.0,511.5" fill="none" stroke="#5f6773" stroke-width="1.3" stroke-linecap="round" stroke-linejoin="round"/></svg>
<svg class="b" style="left:1368px;top:510px" width="13" height="11" viewBox="0 0 13 11"><path d="M3 9C1.7 8.2 1 7.1 1 5.8C1 3.2 3.5 1 6.5 1C9.5 1 12 3.2 12 5.8C12 8.4 9.5 10.5 6.5 10.5C5.8 10.5 5.1 10.4 4.5 10.2L1.2 10.9C2 10.5 2.6 9.8 3 9Z" fill="#6b6b6b"/></svg>
<svg class="b" style="left:1387px;top:510px" width="12" height="12" viewBox="0 0 12 12"><path d="M1.3 0.5V4.2Q1.3 6 2.9 6.2V11Q2.9 11.7 3.6 11.7Q4.3 11.7 4.3 11V6.2Q5.9 6 5.9 4.2V0.5H5.1V3.6H4.3V0.5H2.9V3.6H2.1V0.5Z" fill="#6b6b6b"/><path d="M10.5 0.3Q8 1.2 7.8 4.5V7.5H9.3V11Q9.3 11.7 9.9 11.7Q10.5 11.7 10.5 11Z" fill="#6b6b6b"/></svg>
<div class="b" style="left:25px;top:541px;width:1473px;height:49px;background:#f8fafc"></div>
<div class="b" style="left:902px;top:541px;width:281px;height:49px;background:#fde68a"></div>
<div class="b" style="left:25px;top:541px;width:1473px;height:1px;background:#e5e7eb"></div>
<div class="b" style="left:40px;top:560px;width:13px;height:13px;background:#fff;border:1.8px solid #8c8c8c;border-radius:2px;box-sizing:border-box"></div>
<svg class="b" style="left:63px;top:553px" width="26" height="26" viewBox="0 0 26 26"><defs><clipPath id="ac7"><rect width="26" height="26" rx="5"/></clipPath></defs><g clip-path="url(#ac7)"><rect width="26" height="26" fill="#f77a32"/><path d="M5 27V17Q5.5 14 9 14H17.5Q21 14 21.3 17V27Z" fill="#3e5ba6"/><path d="M9 27L10.5 15.5H13L12.5 27Z M14.5 27L14.8 15.5H17.3L18.2 27Z" fill="#e6b28e"/><ellipse cx="13.9" cy="13.8" rx="3.4" ry="2" fill="#e9b792"/><circle cx="13.8" cy="8" r="3.4" fill="#e9b792"/><path d="M10.3 7.5Q10.4 2.8 13.8 2.8Q17.3 2.8 17.4 7.5Q16 5 13.8 5Q11.6 5 10.3 7.5Z" fill="#6d432a"/></g></svg>
<div class="t" style="left:93.7px;top:560.39px;font-size:11px;color:#6a717d;font-weight:400;letter-spacing:-0.211px;-webkit-text-stroke:0.12px #6a717d;">LOPEZ, Diego</div>
<svg class="b" style="left:244px;top:560px" width="11" height="11" viewBox="0 0 11 11"><circle cx="5.5" cy="5.5" r="5.5" fill="#6b6b6b"/><rect x="4.8" y="4.6" width="1.6" height="4" fill="#fff"/><circle cx="5.6" cy="3" r="0.9" fill="#fff"/><rect x="4" y="8" width="3" height="0.9" fill="#fff"/></svg>
<svg class="b" style="left:692px;top:560px" width="72" height="11" viewBox="0 0 72 11"><rect x="0.20" y="0" width="11.7" height="11" rx="5.3" ry="5.5" fill="#12b981"/><rect x="5.55" y="0" width="1" height="11" fill="#f8fafc"/><rect x="14.95" y="0" width="11.7" height="11" rx="5.3" ry="5.5" fill="#12b981"/><rect x="20.30" y="0" width="1" height="11" fill="#f8fafc"/><rect x="29.70" y="0" width="11.7" height="11" rx="5.3" ry="5.5" fill="#12b981"/><rect x="35.05" y="0" width="1" height="11" fill="#f8fafc"/><rect x="44.45" y="0" width="11.7" height="11" rx="5.3" ry="5.5" fill="#12b981"/><rect x="49.80" y="0" width="1" height="11" fill="#f8fafc"/><rect x="59.20" y="0" width="11.7" height="11" rx="5.3" ry="5.5" fill="#12b981"/><rect x="64.55" y="0" width="1" height="11" fill="#f8fafc"/></svg>
<div class="b" style="left:917px;top:549px;width:151px;height:32px;background:#059669;border-radius:4px"></div>
<div class="b" style="left:1029.5px;top:549px;width:1px;height:32px;background:rgba(255,255,255,0.35)"></div>
<svg class="b" style="left:926px;top:559px" width="16" height="12" viewBox="0 0 16 12"><path d="M1.6 7L5.3 10.6L14.2 1.8" fill="none" stroke="#fff" stroke-width="1.25"/></svg>
<div class="t" style="left:945.5px;top:557.85px;font-size:14px;color:#ffffff;font-weight:400;letter-spacing:0.858px;-webkit-text-stroke:0.25px #ffffff;-webkit-text-stroke:0.4px #fff;">Present</div>
<svg class="b" style="left:0;top:0" width="1536" height="749"><polyline points="1043.5,562.9 1049.5,568.6999999999999 1055.5,562.9" fill="none" stroke="#ffffff" stroke-width="1.25" stroke-linecap="round" stroke-linejoin="round"/></svg>
<svg class="b" style="left:1077px;top:557px" width="19" height="15" viewBox="0 0 19 15"><path d="M4.2 11.3C2.6 10.3 1.8 8.9 1.8 7.4C1.8 4.2 5.1 1.6 9.2 1.6C13.3 1.6 16.6 4.2 16.6 7.4C16.6 10.6 13.3 13.1 9.2 13.1C8.1 13.1 7.1 12.9 6.2 12.6L2.2 14Z" fill="none" stroke="#344256" stroke-width="1.5" stroke-linejoin="round"/></svg>
<div class="b" style="left:1198px;top:550px;width:163px;height:26px;background:#fff;border:1px solid #cfd8e3;border-radius:4px;box-sizing:border-box"></div>
<div class="t" style="left:1205.5px;top:557.04px;font-size:12px;color:#6b7280;font-weight:400;-webkit-text-stroke:0.18px #6b7280;">Packed Lunch</div>
<svg class="b" style="left:0;top:0" width="1536" height="749"><polyline points="1340.0,560.5 1345,565.5 1350.0,560.5" fill="none" stroke="#5f6773" stroke-width="1.3" stroke-linecap="round" stroke-linejoin="round"/></svg>
<svg class="b" style="left:1368px;top:559px" width="13" height="11" viewBox="0 0 13 11"><path d="M3 9C1.7 8.2 1 7.1 1 5.8C1 3.2 3.5 1 6.5 1C9.5 1 12 3.2 12 5.8C12 8.4 9.5 10.5 6.5 10.5C5.8 10.5 5.1 10.4 4.5 10.2L1.2 10.9C2 10.5 2.6 9.8 3 9Z" fill="#6b6b6b"/></svg>
<svg class="b" style="left:1387px;top:559px" width="12" height="12" viewBox="0 0 12 12"><path d="M1.3 0.5V4.2Q1.3 6 2.9 6.2V11Q2.9 11.7 3.6 11.7Q4.3 11.7 4.3 11V6.2Q5.9 6 5.9 4.2V0.5H5.1V3.6H4.3V0.5H2.9V3.6H2.1V0.5Z" fill="#6b6b6b"/><path d="M10.5 0.3Q8 1.2 7.8 4.5V7.5H9.3V11Q9.3 11.7 9.9 11.7Q10.5 11.7 10.5 11Z" fill="#6b6b6b"/></svg>
<div class="b" style="left:25px;top:590px;width:1473px;height:49px;background:#ffffff"></div>
<div class="b" style="left:902px;top:590px;width:281px;height:49px;background:#fde68a"></div>
<div class="b" style="left:25px;top:590px;width:1473px;height:1px;background:#e5e7eb"></div>
<div class="b" style="left:40px;top:609px;width:13px;height:13px;background:#fff;border:1.8px solid #8c8c8c;border-radius:2px;box-sizing:border-box"></div>
<svg class="b" style="left:63px;top:602px" width="26" height="26" viewBox="0 0 26 26"><defs><clipPath id="ac8"><rect width="26" height="26" rx="5"/></clipPath></defs><g clip-path="url(#ac8)"><rect width="26" height="26" fill="#f9bdcb"/><path d="M4 27L4.5 19Q6 15 10 17L12 27Z" fill="#8db2d8"/><path d="M3.5 9Q8 8 12 11L13 19Q8 20 5 17Z" fill="#f1ede8"/><path d="M0 7.5Q5 4.5 9.5 7L9 8.5Q5 7 0.5 9.5Z" fill="#e6b08c"/><circle cx="12.2" cy="8" r="3.3" fill="#eec4a4"/><path d="M8.8 7Q9 3.3 12.2 3.3Q15.5 3.3 15.6 7Q14.2 5.3 12.2 5.3Q10.2 5.3 8.8 7Z" fill="#d8b890"/><path d="M1 24L25 14L26 19L2 27Z" fill="#3fc6e6"/></g></svg>
<div class="t" style="left:93.7px;top:609.39px;font-size:11px;color:#6a717d;font-weight:400;letter-spacing:-0.110px;-webkit-text-stroke:0.12px #6a717d;">MCKILLEN, Georgie</div>
<svg class="b" style="left:692px;top:609px" width="72" height="11" viewBox="0 0 72 11"><rect x="0.20" y="0" width="11.7" height="11" rx="5.3" ry="5.5" fill="#12b981"/><rect x="5.55" y="0" width="1" height="11" fill="#ffffff"/><rect x="14.95" y="0" width="11.7" height="11" rx="5.3" ry="5.5" fill="#12b981"/><rect x="20.30" y="0" width="1" height="11" fill="#ffffff"/><rect x="29.70" y="0" width="11.7" height="11" rx="5.3" ry="5.5" fill="#12b981"/><rect x="35.05" y="0" width="1" height="11" fill="#ffffff"/><rect x="44.45" y="0" width="11.7" height="11" rx="5.3" ry="5.5" fill="#12b981"/><rect x="49.80" y="0" width="1" height="11" fill="#ffffff"/><rect x="59.20" y="0" width="11.7" height="11" rx="5.3" ry="5.5" fill="#12b981"/><rect x="64.55" y="0" width="1" height="11" fill="#ffffff"/></svg>
<div class="b" style="left:917px;top:598px;width:151px;height:32px;background:#059669;border-radius:4px"></div>
<div class="b" style="left:1029.5px;top:598px;width:1px;height:32px;background:rgba(255,255,255,0.35)"></div>
<svg class="b" style="left:926px;top:608px" width="16" height="12" viewBox="0 0 16 12"><path d="M1.6 7L5.3 10.6L14.2 1.8" fill="none" stroke="#fff" stroke-width="1.25"/></svg>
<div class="t" style="left:945.5px;top:606.85px;font-size:14px;color:#ffffff;font-weight:400;letter-spacing:0.858px;-webkit-text-stroke:0.25px #ffffff;-webkit-text-stroke:0.4px #fff;">Present</div>
<svg class="b" style="left:0;top:0" width="1536" height="749"><polyline points="1043.5,611.9 1049.5,617.6999999999999 1055.5,611.9" fill="none" stroke="#ffffff" stroke-width="1.25" stroke-linecap="round" stroke-linejoin="round"/></svg>
<svg class="b" style="left:1077px;top:606px" width="19" height="15" viewBox="0 0 19 15"><path d="M4.2 11.3C2.6 10.3 1.8 8.9 1.8 7.4C1.8 4.2 5.1 1.6 9.2 1.6C13.3 1.6 16.6 4.2 16.6 7.4C16.6 10.6 13.3 13.1 9.2 13.1C8.1 13.1 7.1 12.9 6.2 12.6L2.2 14Z" fill="none" stroke="#344256" stroke-width="1.5" stroke-linejoin="round"/></svg>
<div class="b" style="left:1198px;top:599px;width:163px;height:26px;background:#fff;border:1px solid #cfd8e3;border-radius:4px;box-sizing:border-box"></div>
<div class="t" style="left:1205.5px;top:606.04px;font-size:12px;color:#6b7280;font-weight:400;-webkit-text-stroke:0.18px #6b7280;">School Meal</div>
<svg class="b" style="left:0;top:0" width="1536" height="749"><polyline points="1340.0,609.5 1345,614.5 1350.0,609.5" fill="none" stroke="#5f6773" stroke-width="1.3" stroke-linecap="round" stroke-linejoin="round"/></svg>
<svg class="b" style="left:1368px;top:608px" width="13" height="11" viewBox="0 0 13 11"><path d="M3 9C1.7 8.2 1 7.1 1 5.8C1 3.2 3.5 1 6.5 1C9.5 1 12 3.2 12 5.8C12 8.4 9.5 10.5 6.5 10.5C5.8 10.5 5.1 10.4 4.5 10.2L1.2 10.9C2 10.5 2.6 9.8 3 9Z" fill="#6b6b6b"/></svg>
<svg class="b" style="left:1387px;top:608px" width="12" height="12" viewBox="0 0 12 12"><path d="M1.3 0.5V4.2Q1.3 6 2.9 6.2V11Q2.9 11.7 3.6 11.7Q4.3 11.7 4.3 11V6.2Q5.9 6 5.9 4.2V0.5H5.1V3.6H4.3V0.5H2.9V3.6H2.1V0.5Z" fill="#6b6b6b"/><path d="M10.5 0.3Q8 1.2 7.8 4.5V7.5H9.3V11Q9.3 11.7 9.9 11.7Q10.5 11.7 10.5 11Z" fill="#6b6b6b"/></svg>
<div class="b" style="left:25px;top:639px;width:1473px;height:49px;background:#f8fafc"></div>
<div class="b" style="left:902px;top:639px;width:281px;height:49px;background:#fde68a"></div>
<div class="b" style="left:25px;top:639px;width:1473px;height:1px;background:#e5e7eb"></div>
<div class="b" style="left:40px;top:658px;width:13px;height:13px;background:#fff;border:1.8px solid #8c8c8c;border-radius:2px;box-sizing:border-box"></div>
<svg class="b" style="left:63px;top:651px" width="26" height="26" viewBox="0 0 26 26"><defs><clipPath id="ac9"><rect width="26" height="26" rx="5"/></clipPath></defs><g clip-path="url(#ac9)"><rect width="26" height="26" fill="#c2e1f5"/><path d="M5 27V17Q5.5 12.5 10 12.5H17Q21 12.5 21.5 17V27Z" fill="#d9d9d9"/><path d="M4.5 27L5 20H7V27Z M19.5 27V20H21.5L22 27Z" fill="#e3b08c"/><circle cx="13.5" cy="7.5" r="3.3" fill="#e8b894"/><path d="M10 7Q10 2.5 13.5 2.5Q17 2.5 17 7Q15.8 4.6 13.5 4.6Q11.2 4.6 10 7Z" fill="#8a6a4f"/></g></svg>
<div class="t" style="left:93.7px;top:658.39px;font-size:11px;color:#6a717d;font-weight:400;letter-spacing:-0.125px;-webkit-text-stroke:0.12px #6a717d;">MCNEILL, Raymond</div>
<svg class="b" style="left:692px;top:658px" width="72" height="11" viewBox="0 0 72 11"><rect x="0.20" y="0" width="11.7" height="11" rx="5.3" ry="5.5" fill="#12b981"/><rect x="5.55" y="0" width="1" height="11" fill="#f8fafc"/><rect x="14.95" y="0" width="11.7" height="11" rx="5.3" ry="5.5" fill="#12b981"/><rect x="20.30" y="0" width="1" height="11" fill="#f8fafc"/><rect x="29.70" y="0" width="11.7" height="11" rx="5.3" ry="5.5" fill="#12b981"/><rect x="35.05" y="0" width="1" height="11" fill="#f8fafc"/><rect x="44.45" y="0" width="11.7" height="11" rx="5.3" ry="5.5" fill="#12b981"/><rect x="49.80" y="0" width="1" height="11" fill="#f8fafc"/><rect x="59.20" y="0" width="11.7" height="11" rx="5.3" ry="5.5" fill="#12b981"/><rect x="64.55" y="0" width="1" height="11" fill="#f8fafc"/></svg>
<div class="b" style="left:917px;top:647px;width:151px;height:32px;background:#059669;border-radius:4px"></div>
<div class="b" style="left:1029.5px;top:647px;width:1px;height:32px;background:rgba(255,255,255,0.35)"></div>
<svg class="b" style="left:926px;top:657px" width="16" height="12" viewBox="0 0 16 12"><path d="M1.6 7L5.3 10.6L14.2 1.8" fill="none" stroke="#fff" stroke-width="1.25"/></svg>
<div class="t" style="left:945.5px;top:655.85px;font-size:14px;color:#ffffff;font-weight:400;letter-spacing:0.858px;-webkit-text-stroke:0.25px #ffffff;-webkit-text-stroke:0.4px #fff;">Present</div>
<svg class="b" style="left:0;top:0" width="1536" height="749"><polyline points="1043.5,660.9 1049.5,666.6999999999999 1055.5,660.9" fill="none" stroke="#ffffff" stroke-width="1.25" stroke-linecap="round" stroke-linejoin="round"/></svg>
<svg class="b" style="left:1077px;top:655px" width="19" height="15" viewBox="0 0 19 15"><path d="M4.2 11.3C2.6 10.3 1.8 8.9 1.8 7.4C1.8 4.2 5.1 1.6 9.2 1.6C13.3 1.6 16.6 4.2 16.6 7.4C16.6 10.6 13.3 13.1 9.2 13.1C8.1 13.1 7.1 12.9 6.2 12.6L2.2 14Z" fill="none" stroke="#344256" stroke-width="1.5" stroke-linejoin="round"/></svg>
<div class="b" style="left:1198px;top:648px;width:163px;height:26px;background:#fff;border:1px solid #cfd8e3;border-radius:4px;box-sizing:border-box"></div>
<div class="t" style="left:1205.5px;top:655.04px;font-size:12px;color:#6b7280;font-weight:400;-webkit-text-stroke:0.18px #6b7280;">Packed Lunch</div>
<svg class="b" style="left:0;top:0" width="1536" height="749"><polyline points="1340.0,658.5 1345,663.5 1350.0,658.5" fill="none" stroke="#5f6773" stroke-width="1.3" stroke-linecap="round" stroke-linejoin="round"/></svg>
<svg class="b" style="left:1368px;top:657px" width="13" height="11" viewBox="0 0 13 11"><path d="M3 9C1.7 8.2 1 7.1 1 5.8C1 3.2 3.5 1 6.5 1C9.5 1 12 3.2 12 5.8C12 8.4 9.5 10.5 6.5 10.5C5.8 10.5 5.1 10.4 4.5 10.2L1.2 10.9C2 10.5 2.6 9.8 3 9Z" fill="#6b6b6b"/></svg>
<svg class="b" style="left:1387px;top:657px" width="12" height="12" viewBox="0 0 12 12"><path d="M1.3 0.5V4.2Q1.3 6 2.9 6.2V11Q2.9 11.7 3.6 11.7Q4.3 11.7 4.3 11V6.2Q5.9 6 5.9 4.2V0.5H5.1V3.6H4.3V0.5H2.9V3.6H2.1V0.5Z" fill="#6b6b6b"/><path d="M10.5 0.3Q8 1.2 7.8 4.5V7.5H9.3V11Q9.3 11.7 9.9 11.7Q10.5 11.7 10.5 11Z" fill="#6b6b6b"/></svg>
<div class="b" style="left:25px;top:688px;width:1473px;height:1px;background:#e3e5e8"></div>
<div class="b" style="left:902px;top:689px;width:281px;height:1px;background:#fde68a"></div>
<div class="b" style="left:25px;top:197px;width:1486px;height:2px;background:#d8dce2"></div>
<div class="b" style="left:228px;top:159px;width:2px;height:530px;background:#dde2ea"></div>
<div class="b" style="left:1498px;top:199px;width:13px;height:490px;background:#f1f1f1"></div>
<div class="b" style="left:1499px;top:212px;width:11px;height:291px;background:#c1c1c1"></div>
<svg class="b" style="left:1498px;top:199px" width="13" height="13" viewBox="0 0 13 13"><path d="M3 8.5L6.5 5L10 8.5Z" fill="#a3a3a3"/></svg>
<svg class="b" style="left:1498px;top:676px" width="13" height="13" viewBox="0 0 13 13"><path d="M3 4.5L6.5 8L10 4.5Z" fill="#505050"/></svg>
<div class="b" style="left:24px;top:158px;width:1488px;height:533px;border:1px solid #e2e8f0;border-radius:7px;box-sizing:border-box"></div>
<div class="b" style="left:1528px;top:338px;width:10px;height:79px;background:#1c3262;border-radius:4px"></div>
</body></html>
